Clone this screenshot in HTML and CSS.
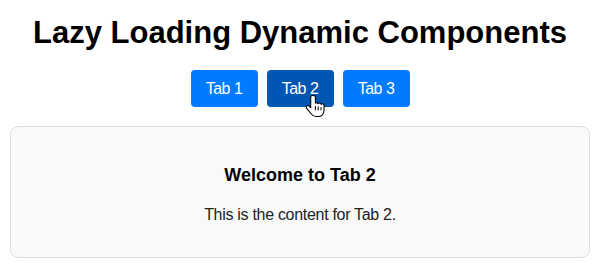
FILE: index.html
```html
<!DOCTYPE html>
<html lang="en">
<head>
  <meta charset="UTF-8" />
  <meta name="viewport" content="width=device-width, initial-scale=1" />
  <title>Lazy Loading Dynamic Components</title>
  <link rel="stylesheet" href="styles.css">
</head>
<body>
  <div class="app">
    <h1>Lazy Loading Dynamic Components</h1>

    <!-- Tab buttons -->
    <div class="tabs">
      <button class="tab">Tab 1</button>
      <button class="tab active">Tab 2
        <svg class="cursor" width="20" height="24" viewBox="0 0 20 24">
          <path d="M6.5 1.5c-1 0-1.8.8-1.8 1.8v10.4l-1.6-1.6c-.8-.8-2-.7-2.6.1-.5.7-.4 1.6.2 2.2l4.6 5.6c1.2 1.5 2.8 2.5 4.8 2.5h2.2c3.3 0 5.7-2.6 5.7-5.9v-5.2c0-.9-.7-1.6-1.6-1.6-.5 0-.9.2-1.2.5-.2-.8-.9-1.3-1.7-1.3-.6 0-1.1.3-1.4.7-.3-.6-.9-1-1.6-1-.4 0-.8.1-1.1.4V3.3c0-1-.8-1.8-1.9-1.8z" fill="#fff" stroke="#000" stroke-width="1.1" stroke-linejoin="round"/>
          <path d="M9.4 12v4.4M12.2 12.4v4M15 13v3.4" stroke="#000" stroke-width="1" fill="none"/>
        </svg>
      </button>
      <button class="tab">Tab 3</button>
    </div>

    <!-- Lazy loaded content -->
    <div class="tab-content">
      <h3>Welcome to Tab 2</h3>
      <p>This is the content for Tab 2.</p>
    </div>
  </div>
</body>
</html>
```

FILE: styles.css
```css
* {
  margin: 0;
  padding: 0;
  box-sizing: border-box;
}

body {
  font-family: 'Liberation Sans', Arial, sans-serif;
  background: #fff;
  color: #000;
  padding: 10px;
}

.app {
  text-align: center;
}

h1 {
  font-size: 31px;
  font-weight: bold;
  margin-top: 5px;
  line-height: 36px;
}

.tabs {
  display: flex;
  justify-content: center;
  gap: 9px;
  margin-top: 19px;
}

.tab {
  position: relative;
  width: 67px;
  height: 37px;
  background: #007bff;
  color: #fff;
  border: none;
  border-radius: 4px;
  font-family: inherit;
  font-size: 16px;
  letter-spacing: -0.5px;
  cursor: pointer;
}

.tab.active {
  background: #0056b3;
}

.cursor {
  position: absolute;
  left: 39px;
  top: 24px;
}

.tab-content {
  margin-top: 19px;
  height: 132px;
  background: #f9f9f9;
  border: 1px solid #ddd;
  border-radius: 8px;
  padding-top: 37px;
}

.tab-content h3 {
  font-size: 18px;
  line-height: 22px;
}

.tab-content p {
  font-size: 16px;
  line-height: 18px;
  letter-spacing: -0.3px;
  margin-top: 20px;
  color: #222;
}
```
